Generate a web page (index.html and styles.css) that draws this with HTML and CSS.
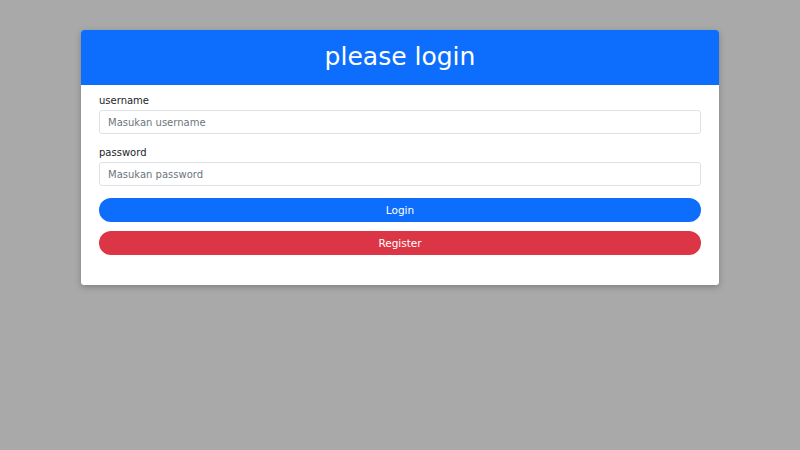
FILE: index.html
```html
<!DOCTYPE html>
<html lang="id">
<head>
  <meta charset="UTF-8">
  <meta name="viewport" content="width=device-width, initial-scale=1.0">
  <title>Login</title>
  <link rel="stylesheet" href="styles.css">
</head>
<body>

  <div class="login-card">
    <header>
      <h1>please login</h1>
    </header>

    <form class="login-form">
      <div class="input-group">
        <label for="username">username</label>
        <input type="text" id="username" placeholder="Masukan username">
      </div>

      <div class="input-group">
        <label for="password">password</label>
        <input type="password" id="password" placeholder="Masukan password">
      </div>

      <button type="button" class="btn btn-login">Login</button>
      <button type="button" class="btn btn-register">Register</button>
    </form>
  </div>

</body>
</html>
```

FILE: styles.css
```css
* {
  margin: 0;
  padding: 0;
  box-sizing: border-box;
  font-family: "DejaVu Sans", sans-serif;
}

body {
  background-color: #a9a9a9;
  min-height: 100vh;
  padding-top: 30px;
  color: #212529;
}

.login-card {
  width: 638px;
  margin: 0 auto;
  background-color: #fff;
  border-radius: 3px;
  box-shadow: 0 2px 6px rgba(0, 0, 0, 0.25);
  overflow: hidden;
}

header {
  background-color: #0d6efd; /* biru */
  color: #fff;
  height: 55px;
  padding-bottom: 3px;
  display: flex;
  align-items: center;
  justify-content: center;
}

header h1 {
  font-size: 25px;
  font-weight: normal;
}

.login-form {
  padding: 7px 18px 30px;
  display: flex;
  flex-direction: column;
}

.input-group {
  display: flex;
  flex-direction: column;
  margin-bottom: 10px;
}

.input-group + .btn {
  margin-top: 2px;
}

.input-group label {
  font-size: 10px;
  line-height: 18px;
}

.input-group input {
  height: 24px;
  padding: 0 8px;
  border: 1px solid #dee2e6;
  border-radius: 3px;
  font-size: 10px;
  color: #212529;
}

.input-group input::placeholder {
  color: #6c757d;
}

.btn {
  height: 24px;
  border: none;
  border-radius: 12px;
  color: #fff;
  font-size: 10.5px;
  cursor: pointer;
}

.btn-login {
  background-color: #0d6efd;
  margin-bottom: 9px;
}

.btn-register {
  background-color: #dc3545; /* merah */
}
```
